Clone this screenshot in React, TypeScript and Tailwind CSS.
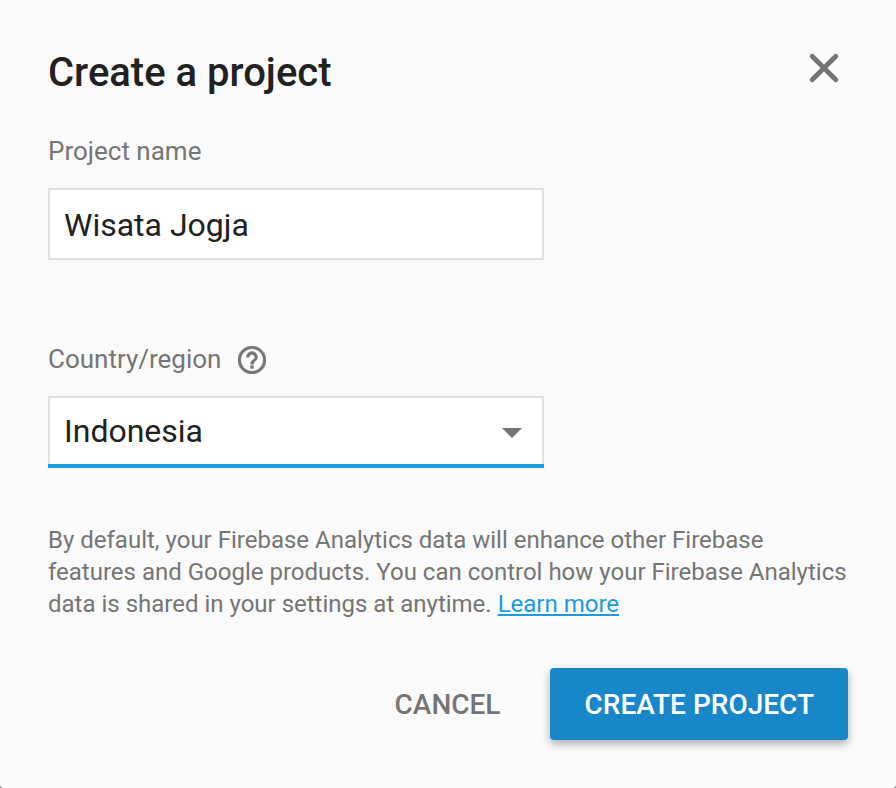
import { useState } from "react"

const countries = ["Indonesia", "Malaysia", "Singapore", "Thailand", "United States"]

export default function App() {
  const [name, setName] = useState("Wisata Jogja")
  const [country, setCountry] = useState("Indonesia")

  return (
    <main className="min-h-screen bg-[#8c8c8c] font-['Roboto',sans-serif] antialiased">
      <form
        className="flex min-h-screen flex-col rounded-b-sm bg-[#fafafa] px-12 pt-12 pb-12"
        onSubmit={(e) => e.preventDefault()}
      >
        <header className="flex items-start justify-between">
          <h1 className="text-[40px] leading-[50px] font-medium text-[#212121]">
            Create a project
          </h1>
          <button type="button" aria-label="Close" className="text-[#757575]">
            <svg
              viewBox="0 4 48 40"
              className="h-10 w-12"
              fill="none"
              stroke="currentColor"
              strokeWidth="4.8"
              strokeLinecap="round"
            >
              <path d="M12.2 12.2l23.6 23.6M35.8 12.2L12.2 35.8" />
            </svg>
          </button>
        </header>

        <label htmlFor="project-name" className="mt-[37px] text-[26px] leading-8 text-[#757575]">
          Project name
        </label>
        <input
          id="project-name"
          type="text"
          value={name}
          onChange={(e) => setName(e.target.value)}
          className="mt-[21px] h-18 w-full max-w-[496px] border-2 border-[#e0e0e0] bg-white px-[14px] pt-0.5 text-[32px] text-[#212121] outline-none"
        />

        <div className="mt-[83px] flex items-center gap-[17px]">
          <label htmlFor="country" className="text-[26px] leading-8 text-[#757575]">
            Country/region
          </label>
          <button type="button" aria-label="Help" className="pt-0.5 text-[#757575]">
            <svg
              viewBox="2 2 20 20"
              className="h-7 w-7"
              fill="currentColor"
              stroke="currentColor"
              strokeWidth="0.3"
            >
              <path d="M11 18h2v-2h-2v2zm1-16C6.48 2 2 6.48 2 12s4.48 10 10 10 10-4.48 10-10S17.52 2 12 2zm0 18c-4.41 0-8-3.59-8-8s3.59-8 8-8 8 3.59 8 8-3.59 8-8 8zm0-14c-2.21 0-4 1.79-4 4h2c0-1.1.9-2 2-2s2 .9 2 2c0 2-3 1.75-3 5h2c0-2.25 3-2.5 3-5 0-2.21-1.79-4-4-4z" />
            </svg>
          </button>
        </div>
        <div className="relative mt-[21px] w-full max-w-[496px] border-b-4 border-[#1a9be0]">
          <select
            id="country"
            value={country}
            onChange={(e) => setCountry(e.target.value)}
            className="block h-17 w-full appearance-none border-2 border-b-0 border-[#e0e0e0] bg-white px-[14px] text-[32px] text-[#212121] outline-none"
          >
            {countries.map((item) => (
              <option key={item}>{item}</option>
            ))}
          </select>
          <svg
            viewBox="0 0 20 10"
            className="pointer-events-none absolute top-8 right-[22px] h-[10px] w-5"
            fill="#757575"
          >
            <path d="M0 0h20L10 10z" />
          </svg>
        </div>

        <p className="mt-14 text-2xl leading-8 text-[#757575]">
          By default, your Firebase Analytics data will enhance other Firebase features and Google
          products. You can control how your Firebase Analytics data is shared in your settings at
          anytime.{" "}
          <a href="#" className="text-[#1a9be0] underline">
            Learn more
          </a>
        </p>

        <div className="mt-12 flex justify-end gap-4">
          <button type="button" className="h-18 px-[34px] pt-0.5 text-[28px] font-medium text-[#757575]">
            CANCEL
          </button>
          <button
            type="submit"
            className="h-18 rounded-sm bg-[#1887c9] px-[34px] pt-0.5 text-[28px] font-medium text-white shadow-[0_4px_8px_rgba(0,0,0,0.3)]"
          >
            CREATE PROJECT
          </button>
        </div>
      </form>
    </main>
  )
}
